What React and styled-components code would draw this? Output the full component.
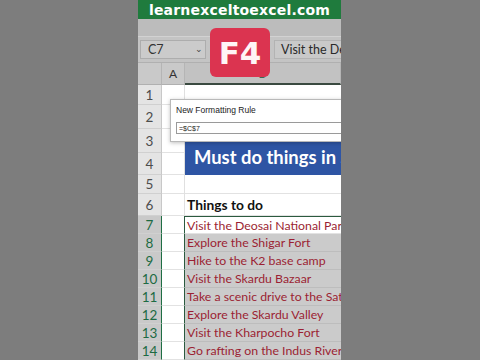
import React from "react";
import styled, { createGlobalStyle } from "styled-components";

const Global = createGlobalStyle`
  html, body { margin: 0; padding: 0; background: #7d7d7d; }
  #root { width: 480px; height: 360px; overflow: hidden; }
`;

const Page = styled.div`
  width: 480px;
  height: 360px;
  display: flex;
  justify-content: flex-start;
  background: #7d7d7d;
  font-family: Lato, "Liberation Sans", sans-serif;
`;

const Frame = styled.div`
  position: relative;
  margin-left: 138px;
  width: 203px;
  height: 360px;
  overflow: hidden;
  display: flex;
  flex-direction: column;
  background: #ffffff;
`;

const Banner = styled.div`
  height: 19px;
  flex: none;
  background: #1f7b3d;
  color: #ffffff;
  display: flex;
  align-items: center;
  justify-content: center;
  font-family: "DejaVu Sans", sans-serif;
  font-weight: bold;
  font-size: 14px;
  letter-spacing: 0.2px;
`;

const Ribbon = styled.div`
  height: 17px;
  flex: none;
  background: #bcbcbc;
  border-bottom: 1px solid #d2d2d2;
`;

const FormulaRow = styled.div`
  height: 25px;
  flex: none;
  background: #c4c4c4;
  display: flex;
  align-items: center;
  padding-left: 2px;
  border-bottom: 1px solid #b0b0b0;
  overflow: hidden;
`;

const NameBox = styled.div`
  flex: none;
  width: 66px;
  height: 19px;
  box-sizing: border-box;
  border: 1px solid #adadad;
  background: #cbcbcb;
  display: flex;
  align-items: center;
  justify-content: space-between;
  padding: 0 2px 0 7px;
  font-size: 12.5px;
  color: #333;
`;

const Chevron = styled.span`
  font-size: 9px;
  color: #444;
  margin-top: -3px;
`;

const FormulaBox = styled.div`
  flex: none;
  margin-left: 68px;
  height: 19px;
  width: 80px;
  box-sizing: border-box;
  border: 1px solid #b3b3b3;
  border-right: none;
  background: #c9c9c9;
  display: flex;
  align-items: center;
  padding-left: 6px;
  font-size: 12.5px;
  color: #2a2a2a;
  white-space: nowrap;
  overflow: hidden;
`;

const Badge = styled.div`
  position: absolute;
  left: 72px;
  top: 28px;
  width: 60px;
  height: 49px;
  border-radius: 6px;
  background: #db3450;
  color: #fff5f6;
  display: flex;
  align-items: center;
  justify-content: center;
  font-family: "DejaVu Sans", sans-serif;
  font-weight: bold;
  font-size: 31px;
`;

const Row = styled.div`
  display: grid;
  grid-template-columns: 24px 23px 1fr;
  height: ${(p) => p.$h}px;
  flex: none;
`;

const RowHead = styled.div`
  display: flex;
  align-items: center;
  justify-content: center;
  background: ${(p) => (p.$sel ? "#c9c9c9" : "#e4e4e4")};
  color: ${(p) => (p.$sel ? "#1d6b43" : "#4d4d4d")};
  font-size: 13.5px;
  border-right: 1px solid ${(p) => (p.$sel ? "#1f6e44" : "#c8c8c8")};
  border-bottom: 1px solid #d0d0d0;
  box-sizing: border-box;
`;

const ColHeadRow = styled(Row)`
  background: #c9c9c9;
`;

const ColHead = styled.div`
  display: flex;
  align-items: center;
  justify-content: center;
  font-size: 12px;
  color: ${(p) => (p.$sel ? "#3c6b52" : "#333")};
  background: ${(p) => (p.$sel ? "#c2c2c2" : "#c9c9c9")};
  border-right: 1px solid #b5b5b5;
  border-bottom: ${(p) => (p.$sel ? "2px solid #3a4a40" : "1px solid #b0b0b0")};
  box-sizing: border-box;
`;

const Corner = styled.div`
  background: #c9c9c9;
  border-right: 1px solid #b5b5b5;
  border-bottom: 1px solid #b0b0b0;
`;

const CellA = styled.div`
  background: #ffffff;
  border-right: 1px solid ${(p) => (p.$sel ? "#2b5a3f" : "#e0e0e0")};
  border-bottom: 1px solid #e2e2e2;
  box-sizing: border-box;
`;

const CellB = styled.div`
  background: ${(p) => (p.$shade ? "#cbcbcb" : "#ffffff")};
  border-bottom: 1px solid ${(p) => (p.$shade ? "#bdbdbd" : "#e2e2e2")};
  box-sizing: border-box;
  display: flex;
  align-items: center;
  padding-left: 2px;
  white-space: nowrap;
  overflow: hidden;
  color: ${(p) => (p.$red ? "#9b1f33" : "#111")};
  font-size: ${(p) => (p.$bold ? 13.8 : 12.3)}px;
  font-weight: ${(p) => (p.$bold ? 700 : 400)};
  border-top: ${(p) => (p.$top ? "1px solid #2b5a3f" : "none")};
`;

const Title = styled.div`
  grid-column: 3;
  grid-row: 1 / span 2;
  background: #2e55a4;
  color: #ffffff;
  font-weight: 700;
  font-size: 18.4px;
  display: flex;
  align-items: flex-end;
  padding: 0 0 7px 9px;
  white-space: nowrap;
  overflow: hidden;
`;

const MergedBlock = styled.div`
  display: grid;
  grid-template-columns: 24px 23px 1fr;
  grid-template-rows: 24px 22px;
  flex: none;
`;

const Dialog = styled.div`
  position: absolute;
  left: 32px;
  top: 99px;
  width: 200px;
  height: 43px;
  box-sizing: border-box;
  background: #ffffff;
  border: 1px solid #b9b9b9;
  box-shadow: 0 1px 4px rgba(0, 0, 0, 0.25);
  padding: 5px 0 0 5px;
  font-family: "Liberation Sans", sans-serif;
`;

const DialogTitle = styled.div`
  font-size: 8.5px;
  color: #222;
`;

const DialogInput = styled.div`
  margin-top: 7px;
  height: 12px;
  box-sizing: border-box;
  border: 1px solid #9a9a9a;
  border-right: none;
  font-size: 7px;
  color: #222;
  padding-left: 2px;
  display: flex;
  align-items: center;
`;

const items = [
  "Visit the Deosai National Park",
  "Explore the Shigar Fort",
  "Hike to the K2 base camp",
  "Visit the Skardu Bazaar",
  "Take a scenic drive to the Satpara Lake",
  "Explore the Skardu Valley",
  "Visit the Kharpocho Fort",
  "Go rafting on the Indus River",
];

export default function App() {
  return (
    <>
      <Global />
      <Page>
        <Frame>
          <Banner>learnexceltoexcel.com</Banner>
          <Ribbon />
          <FormulaRow>
            <NameBox>
              C7<Chevron>⌄</Chevron>
            </NameBox>
            <FormulaBox>Visit the Deosai National Park</FormulaBox>
          </FormulaRow>
          <ColHeadRow $h={22}>
            <Corner />
            <ColHead>A</ColHead>
            <ColHead $sel>B</ColHead>
          </ColHeadRow>
          <Row $h={20}>
            <RowHead>1</RowHead>
            <CellA />
            <CellB />
          </Row>
          <Row $h={24}>
            <RowHead>2</RowHead>
            <CellA />
            <CellB />
          </Row>
          <MergedBlock>
            <RowHead>3</RowHead>
            <CellA />
            <Title>Must do things in Skardu</Title>
            <RowHead>4</RowHead>
            <CellA />
          </MergedBlock>
          <Row $h={19}>
            <RowHead>5</RowHead>
            <CellA />
            <CellB />
          </Row>
          <Row $h={22}>
            <RowHead>6</RowHead>
            <CellA />
            <CellB $bold>Things to do</CellB>
          </Row>
          {items.map((t, i) => (
            <Row key={t} $h={18}>
              <RowHead $sel>{i + 7}</RowHead>
              <CellA $sel />
              <CellB $red $shade={i > 0} $top={i === 0}>
                {t}
              </CellB>
            </Row>
          ))}
          <Badge>F4</Badge>
          <Dialog>
            <DialogTitle>New Formatting Rule</DialogTitle>
            <DialogInput>=$C$7</DialogInput>
          </Dialog>
        </Frame>
      </Page>
    </>
  );
}
